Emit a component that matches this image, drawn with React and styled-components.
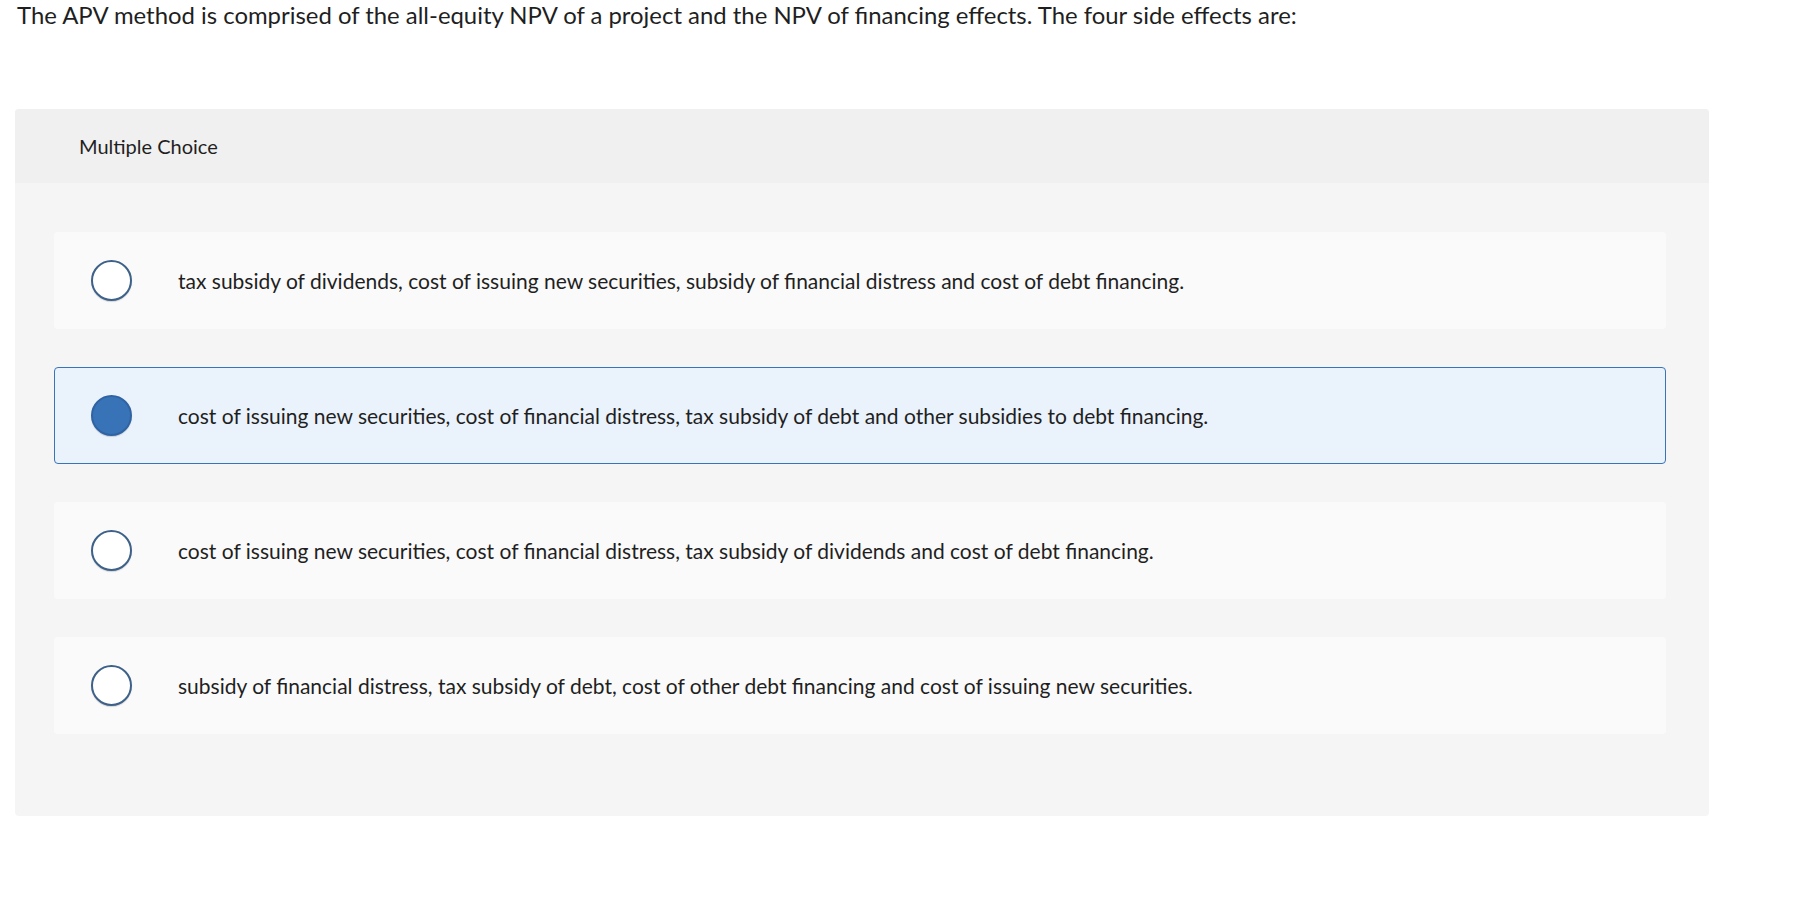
import React from "react";
import styled, { createGlobalStyle } from "styled-components";

const GlobalStyle = createGlobalStyle`
  body {
    margin: 0;
    background: #ffffff;
    font-family: Lato, "Liberation Sans", sans-serif;
    color: #1f1f1f;
  }
`;

const Page = styled.div`
  padding: 0 104px 0 15px;
`;

const Question = styled.p`
  margin: 0 0 0 2px;
  font-size: 23.9px;
  line-height: 30px;
  color: #1f1f1f;
`;

const Panel = styled.div`
  margin-top: 79px;
  width: 1694px;
  background: #f5f5f5;
  border-radius: 4px;
  overflow: hidden;
`;

const PanelHeader = styled.div`
  height: 74px;
  display: flex;
  align-items: center;
  padding-left: 64px;
  background: #f0f0f0;
  font-size: 20px;
  color: #1f1f1f;
`;

const Choices = styled.div`
  display: flex;
  flex-direction: column;
  gap: 38px;
  padding: 49px 43px 82px 39px;
`;

const Choice = styled.label`
  height: 97px;
  box-sizing: border-box;
  display: flex;
  align-items: center;
  padding-left: ${p => (p.selected ? 36 : 37)}px;
  background: ${p => (p.selected ? "#eaf2fb" : "#fafafa")};
  border: ${p => (p.selected ? "1px solid #3a74b8" : "none")};
  border-radius: 4px;
  cursor: pointer;
`;

const Radio = styled.span`
  flex: none;
  width: 41px;
  height: 41px;
  box-sizing: border-box;
  border-radius: 50%;
  border: 2px solid ${p => (p.selected ? "#2f63a3" : "#3d6189")};
  background: ${p => (p.selected ? "#3873b7" : "#ffffff")};
  box-shadow: 0 1px 1px rgba(0, 0, 0, 0.15);
`;

const ChoiceText = styled.span`
  margin-left: 46px;
  font-size: 21px;
  color: #1f1f1f;
`;

const choices = [
  "tax subsidy of dividends, cost of issuing new securities, subsidy of financial distress and cost of debt financing.",
  "cost of issuing new securities, cost of financial distress, tax subsidy of debt and other subsidies to debt financing.",
  "cost of issuing new securities, cost of financial distress, tax subsidy of dividends and cost of debt financing.",
  "subsidy of financial distress, tax subsidy of debt, cost of other debt financing and cost of issuing new securities."
];

export default function App() {
  const selected = 1;
  return (
    <Page>
      <GlobalStyle />
      <Question>
        The APV method is comprised of the all-equity NPV of a project and the
        NPV of financing effects. The four side effects are:
      </Question>
      <Panel>
        <PanelHeader>Multiple Choice</PanelHeader>
        <Choices>
          {choices.map((text, i) => (
            <Choice key={i} selected={i === selected}>
              <Radio selected={i === selected} />
              <ChoiceText>{text}</ChoiceText>
            </Choice>
          ))}
        </Choices>
      </Panel>
    </Page>
  );
}
